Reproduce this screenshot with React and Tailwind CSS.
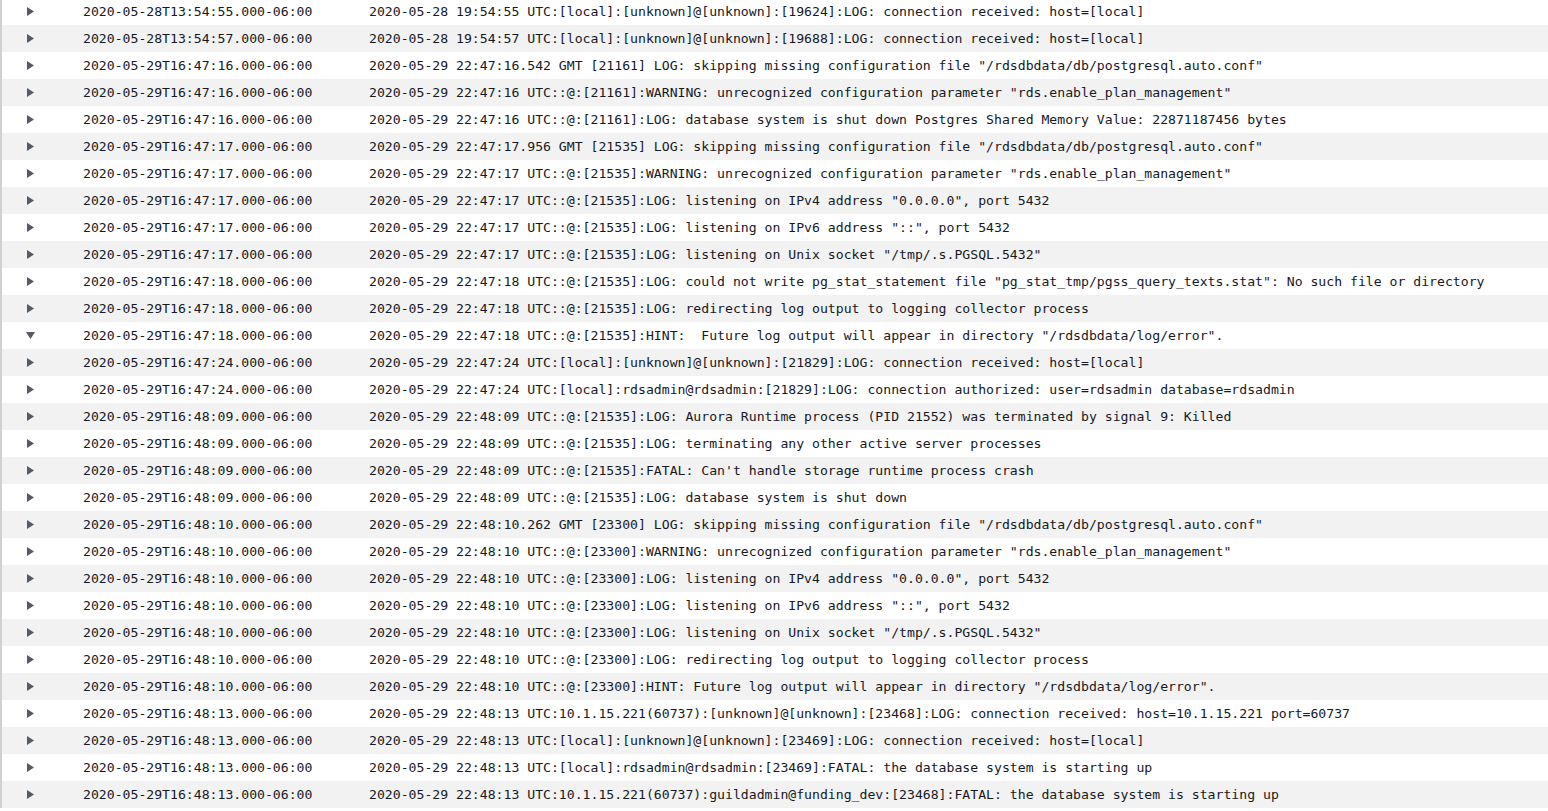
import React from 'react';

const logs = [
  ['2020-05-28T13:54:55.000-06:00', '2020-05-28 19:54:55 UTC:[local]:[unknown]@[unknown]:[19624]:LOG: connection received: host=[local]'],
  ['2020-05-28T13:54:57.000-06:00', '2020-05-28 19:54:57 UTC:[local]:[unknown]@[unknown]:[19688]:LOG: connection received: host=[local]'],
  ['2020-05-29T16:47:16.000-06:00', '2020-05-29 22:47:16.542 GMT [21161] LOG: skipping missing configuration file "/rdsdbdata/db/postgresql.auto.conf"'],
  ['2020-05-29T16:47:16.000-06:00', '2020-05-29 22:47:16 UTC::@:[21161]:WARNING: unrecognized configuration parameter "rds.enable_plan_management"'],
  ['2020-05-29T16:47:16.000-06:00', '2020-05-29 22:47:16 UTC::@:[21161]:LOG: database system is shut down Postgres Shared Memory Value: 22871187456 bytes'],
  ['2020-05-29T16:47:17.000-06:00', '2020-05-29 22:47:17.956 GMT [21535] LOG: skipping missing configuration file "/rdsdbdata/db/postgresql.auto.conf"'],
  ['2020-05-29T16:47:17.000-06:00', '2020-05-29 22:47:17 UTC::@:[21535]:WARNING: unrecognized configuration parameter "rds.enable_plan_management"'],
  ['2020-05-29T16:47:17.000-06:00', '2020-05-29 22:47:17 UTC::@:[21535]:LOG: listening on IPv4 address "0.0.0.0", port 5432'],
  ['2020-05-29T16:47:17.000-06:00', '2020-05-29 22:47:17 UTC::@:[21535]:LOG: listening on IPv6 address "::", port 5432'],
  ['2020-05-29T16:47:17.000-06:00', '2020-05-29 22:47:17 UTC::@:[21535]:LOG: listening on Unix socket "/tmp/.s.PGSQL.5432"'],
  ['2020-05-29T16:47:18.000-06:00', '2020-05-29 22:47:18 UTC::@:[21535]:LOG: could not write pg_stat_statement file "pg_stat_tmp/pgss_query_texts.stat": No such file or directory'],
  ['2020-05-29T16:47:18.000-06:00', '2020-05-29 22:47:18 UTC::@:[21535]:LOG: redirecting log output to logging collector process'],
  ['2020-05-29T16:47:18.000-06:00', '2020-05-29 22:47:18 UTC::@:[21535]:HINT:  Future log output will appear in directory "/rdsdbdata/log/error".', true],
  ['2020-05-29T16:47:24.000-06:00', '2020-05-29 22:47:24 UTC:[local]:[unknown]@[unknown]:[21829]:LOG: connection received: host=[local]'],
  ['2020-05-29T16:47:24.000-06:00', '2020-05-29 22:47:24 UTC:[local]:rdsadmin@rdsadmin:[21829]:LOG: connection authorized: user=rdsadmin database=rdsadmin'],
  ['2020-05-29T16:48:09.000-06:00', '2020-05-29 22:48:09 UTC::@:[21535]:LOG: Aurora Runtime process (PID 21552) was terminated by signal 9: Killed'],
  ['2020-05-29T16:48:09.000-06:00', '2020-05-29 22:48:09 UTC::@:[21535]:LOG: terminating any other active server processes'],
  ['2020-05-29T16:48:09.000-06:00', "2020-05-29 22:48:09 UTC::@:[21535]:FATAL: Can't handle storage runtime process crash"],
  ['2020-05-29T16:48:09.000-06:00', '2020-05-29 22:48:09 UTC::@:[21535]:LOG: database system is shut down'],
  ['2020-05-29T16:48:10.000-06:00', '2020-05-29 22:48:10.262 GMT [23300] LOG: skipping missing configuration file "/rdsdbdata/db/postgresql.auto.conf"'],
  ['2020-05-29T16:48:10.000-06:00', '2020-05-29 22:48:10 UTC::@:[23300]:WARNING: unrecognized configuration parameter "rds.enable_plan_management"'],
  ['2020-05-29T16:48:10.000-06:00', '2020-05-29 22:48:10 UTC::@:[23300]:LOG: listening on IPv4 address "0.0.0.0", port 5432'],
  ['2020-05-29T16:48:10.000-06:00', '2020-05-29 22:48:10 UTC::@:[23300]:LOG: listening on IPv6 address "::", port 5432'],
  ['2020-05-29T16:48:10.000-06:00', '2020-05-29 22:48:10 UTC::@:[23300]:LOG: listening on Unix socket "/tmp/.s.PGSQL.5432"'],
  ['2020-05-29T16:48:10.000-06:00', '2020-05-29 22:48:10 UTC::@:[23300]:LOG: redirecting log output to logging collector process'],
  ['2020-05-29T16:48:10.000-06:00', '2020-05-29 22:48:10 UTC::@:[23300]:HINT: Future log output will appear in directory "/rdsdbdata/log/error".'],
  ['2020-05-29T16:48:13.000-06:00', '2020-05-29 22:48:13 UTC:10.1.15.221(60737):[unknown]@[unknown]:[23468]:LOG: connection received: host=10.1.15.221 port=60737'],
  ['2020-05-29T16:48:13.000-06:00', '2020-05-29 22:48:13 UTC:[local]:[unknown]@[unknown]:[23469]:LOG: connection received: host=[local]'],
  ['2020-05-29T16:48:13.000-06:00', '2020-05-29 22:48:13 UTC:[local]:rdsadmin@rdsadmin:[23469]:FATAL: the database system is starting up'],
  ['2020-05-29T16:48:13.000-06:00', '2020-05-29 22:48:13 UTC:10.1.15.221(60737):guildadmin@funding_dev:[23468]:FATAL: the database system is starting up'],
];

const Caret = ({ open }) =>
  open ? (
    <svg width="9" height="7" viewBox="0 0 9 7" className="ml-[-1px]">
      <polygon points="0,0 9,0 4.5,7" fill="#545b64" />
    </svg>
  ) : (
    <svg width="7" height="9" viewBox="0 0 7 9">
      <polygon points="0,0 7,4.5 0,9" fill="#545b64" />
    </svg>
  );

export default function App() {
  return (
    <div className="h-[811px] overflow-hidden bg-white">
      <div
        className="-mt-[2px] border-l-2 border-[#cfd2d3] text-[13.15px] text-[#16191f]"
        style={{ fontFamily: '"DejaVu Sans Mono", "Liberation Mono", monospace' }}
      >
        {logs.map(([time, msg, open], i) => (
          <div
            key={i}
            className={`flex h-[27px] items-center ${i % 2 === 1 ? 'bg-[#f2f2f2]' : 'bg-white'}`}
          >
            <div className="flex w-[81px] shrink-0 items-center pl-[25px]">
              <Caret open={open} />
            </div>
            <div className="w-[286px] shrink-0 whitespace-pre">{time}</div>
            <div className="whitespace-pre">{msg}</div>
          </div>
        ))}
      </div>
    </div>
  );
}
